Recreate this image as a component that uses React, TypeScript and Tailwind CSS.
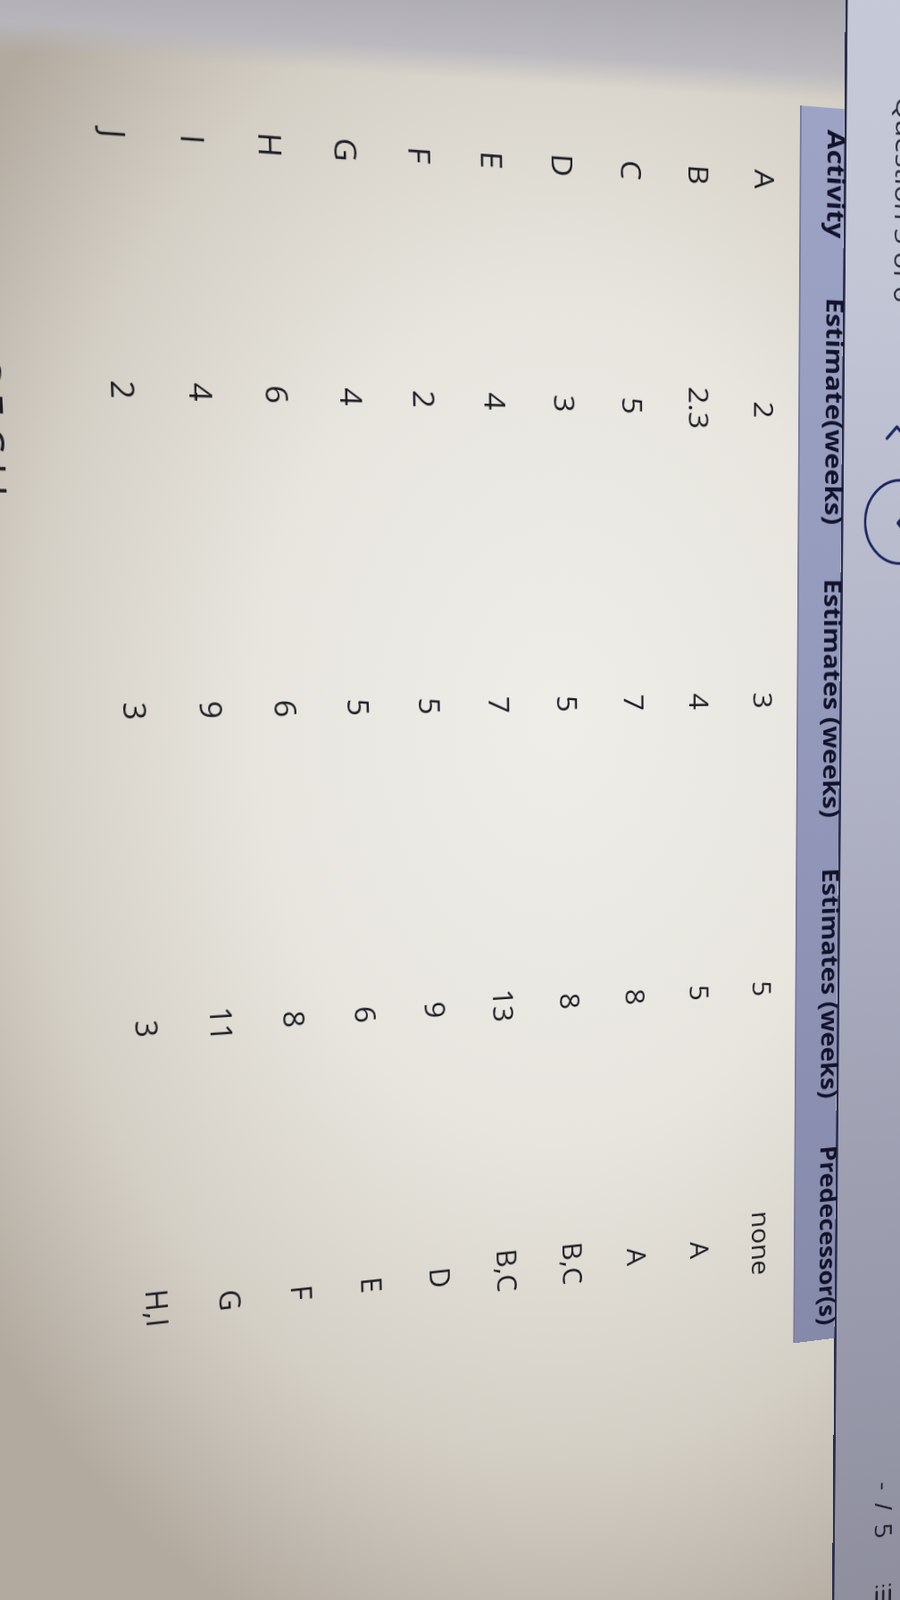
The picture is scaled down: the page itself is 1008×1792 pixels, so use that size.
import { Check, ChevronLeft, List } from "lucide-react";

const headers = [
  "Activity",
  "Estimate(weeks)",
  "Estimates (weeks)",
  "Estimates (weeks)",
  "Predecessor(s)",
];

const rows = [
  ["A", "2", "3", "5", "none"],
  ["B", "2.3", "4", "5", "A"],
  ["C", "5", "7", "8", "A"],
  ["D", "3", "5", "8", "B,C"],
  ["E", "4", "7", "13", "B,C"],
  ["F", "2", "5", "9", "D"],
  ["G", "4", "5", "6", "E"],
  ["H", "6", "6", "8", "F"],
  ["I", "4", "9", "11", "G"],
  ["J", "2", "3", "3", "H,I"],
];

const cols = "grid grid-cols-[160px_329px_308px_348px_252px] w-[1397px]";

export default function App() {
  return (
    <div className="w-[1008px] h-[1792px] overflow-hidden font-['Open_Sans',sans-serif] bg-[linear-gradient(183.5deg,rgba(166,165,172,0.95)_0%,rgba(184,183,190,0.9)_4.6%,rgba(205,204,208,0)_6.4%),radial-gradient(ellipse_80%_62%_at_62%_45%,#eeede8_0%,#e7e5de_42%,#d4cfc5_74%,#b2aa9f_100%)]">
      <div className="w-[1792px] h-[1008px] overflow-hidden origin-top-left [transform:translateX(1008px)_rotate(90deg)]">
        <div className="-ml-[200px] -mt-[100px] w-[2200px] h-[1300px] flex flex-col origin-[200px_100px] [transform:matrix3d(1.074485,0.012526,0,0.00005936,-0.089525,0.874264,0,-0.00013366,0,0,1,0,-3.112,15.222,0,1)]">
          {/* page top bar */}
          <div className="h-[152px] shrink-0 flex items-start pt-[40px] border-b-[3px] border-[#2a2d4b] bg-[linear-gradient(90deg,#c7cad8_0%,#c3c6d5_22%,#b2b5c7_45%,#9d9fb1_70%,#8a8a98_100%)]">
            <div className="ml-[303px] -mt-[6px] w-[337px] h-[80px] flex items-center whitespace-nowrap text-[31px] leading-none text-[#2a2a38]">
              Question 5 of 6
            </div>
            <div className="w-[52px] h-[80px] flex items-center justify-center text-[#1d2463]">
              <ChevronLeft size={52} strokeWidth={1.6} />
            </div>
            <div className="ml-[25px] -mt-[14px] w-[96px] h-[96px] shrink-0 rounded-full border-[3px] border-[#1d2463] flex items-center justify-center text-[#1d2463]">
              <Check size={46} strokeWidth={2.4} className="-mt-[14px] ml-[14px]" />
            </div>
            <div className="ml-[1093px] w-[100px] h-[80px] flex items-center whitespace-nowrap text-[33px] leading-none tracking-[0.1em] text-[#1f1f28]">
              - / 5
            </div>
            <div className="ml-[29px] h-[80px] flex items-center text-[#1f1f28]">
              <List size={32} strokeWidth={2.4} />
            </div>
          </div>

          {/* table */}
          <div className="pl-[321px] shrink-0">
            <div className={`${cols} h-[56px] border-b-2 border-[#757a9c] bg-[linear-gradient(90deg,#9da3c5_0%,#949abc_45%,#8589aa_100%)]`}>
              {headers.map((h, i) => (
                <div
                  key={i}
                  className="text-center whitespace-nowrap text-[30px] font-bold leading-[20px] text-[#12132a]"
                >
                  {h}
                </div>
              ))}
            </div>
            <div className="pt-[3px]">
              {rows.map((r, ri) => (
                <div key={ri} className={`${cols} h-[81px] items-center`}>
                  {r.map((c, ci) => (
                    <div
                      key={ci}
                      className="text-center whitespace-nowrap text-[32px] leading-none text-[#1c1c24]"
                    >
                      {c}
                    </div>
                  ))}
                </div>
              ))}
            </div>
          </div>

          {/* cut-off text at the edge */}
          <div className="ml-[620px] mt-[76px] text-[40px] leading-[40px] tracking-[0.25em] text-[#1b1b22]">
            SECII
          </div>
        </div>
      </div>
    </div>
  );
}
